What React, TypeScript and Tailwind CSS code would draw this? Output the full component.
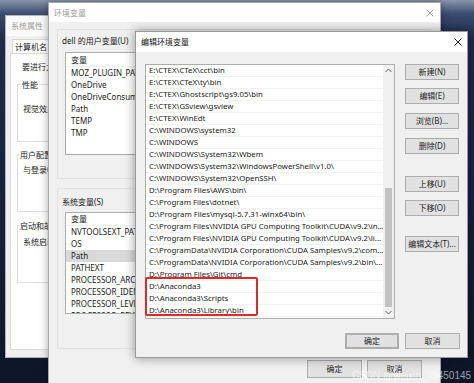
import React from "react";

const pathRows = [
  "E:\\CTEX\\CTeX\\cct\\bin",
  "E:\\CTEX\\CTeX\\ty\\bin",
  "E:\\CTEX\\Ghostscript\\gs9.05\\bin",
  "E:\\CTEX\\GSview\\gsview",
  "E:\\CTEX\\WinEdt",
  "C:\\WINDOWS\\system32",
  "C:\\WINDOWS",
  "C:\\WINDOWS\\System32\\Wbem",
  "C:\\WINDOWS\\System32\\WindowsPowerShell\\v1.0\\",
  "C:\\WINDOWS\\System32\\OpenSSH\\",
  "D:\\Program Files\\AWS\\bin\\",
  "C:\\Program Files\\dotnet\\",
  "D:\\Program Files\\mysql-5.7.31-winx64\\bin\\",
  "C:\\Program Files\\NVIDIA GPU Computing Toolkit\\CUDA\\v9.2\\in...",
  "C:\\Program Files\\NVIDIA GPU Computing Toolkit\\CUDA\\v9.2\\li...",
  "C:\\ProgramData\\NVIDIA Corporation\\CUDA Samples\\v9.2\\com...",
  "C:\\ProgramData\\NVIDIA Corporation\\CUDA Samples\\v9.2\\bin\\...",
  "D:\\Program Files\\Git\\cmd",
  "D:\\Anaconda3",
  "D:\\Anaconda3\\Scripts",
  "D:\\Anaconda3\\Library\\bin",
];

const userVars = ["MOZ_PLUGIN_PATH", "OneDrive", "OneDriveConsumer", "Path", "TEMP", "TMP"];

const sysVars = [
  "NVTOOLSEXT_PATH",
  "OS",
  "Path",
  "PATHEXT",
  "PROCESSOR_ARCHITECTURE",
  "PROCESSOR_IDENTIFIER",
  "PROCESSOR_LEVEL",
  "PROCESSOR_REVISION",
];

function CloseX({ color }: { color: string }) {
  return (
    <svg width="8" height="8" viewBox="0 0 8 8">
      <path d="M0.5 0.5L7.5 7.5M7.5 0.5L0.5 7.5" stroke={color} strokeWidth="1" />
    </svg>
  );
}

function Btn({ children, className = "" }: { children: React.ReactNode; className?: string }) {
  return (
    <div
      className={`h-[16px] flex items-center justify-center bg-[#e1e1e1] border border-[#adadad] text-[8px] text-[#1e1e1e] ${className}`}
    >
      {children}
    </div>
  );
}

function Chevron({ up }: { up?: boolean }) {
  return (
    <svg width="7" height="5" viewBox="0 0 7 5">
      <path d={up ? "M0.5 4L3.5 1L6.5 4" : "M0.5 1L3.5 4L6.5 1"} stroke="#606060" strokeWidth="1" fill="none" />
    </svg>
  );
}

function VarList({ rows, headerH, selected }: { rows: string[]; headerH: string; selected?: number }) {
  return (
    <div className="flex-1 flex flex-col bg-white border border-[#abadb3] overflow-hidden">
      <div className={`${headerH} flex items-center shrink-0 pl-[5px] border-b border-[#f0f0f0]`}>变量</div>
      {rows.map((r, i) => (
        <div
          key={r}
          className={`h-[12px] shrink-0 flex items-center pl-[5px] whitespace-nowrap ${i === selected ? "bg-[#d9d9d9]" : ""}`}
        >
          {r}
        </div>
      ))}
    </div>
  );
}

export default function App() {
  return (
    <div className="relative w-[474px] h-[383px] overflow-hidden bg-[linear-gradient(180deg,#8a96aa_0px,#3a4b6e_14px,#1c2b4e_40px,#142240_200px,#0e1528_383px)] font-['Noto_Sans','Noto_Sans_CJK_SC',sans-serif] text-[8px] text-[#1a1a1a]">
      {/* 系统属性 */}
      <div className="absolute left-[5px] top-[15px] w-[200px] h-[343px] bg-[#f0f0f0] border border-[#b4b4b4] flex flex-col">
        <div className="h-[20px] shrink-0 bg-[#fafafa] flex items-center pl-[5px] text-[#9a9a9a]">系统属性</div>
        <div className="flex pl-[6px] pt-[3px]">
          <div className="h-[14px] px-[2px] flex items-center bg-white border border-b-0 border-[#d9d9d9]">计算机名</div>
        </div>
        <div className="flex-1 mx-[4px] mb-[7px] bg-white border border-[#d9d9d9] flex flex-col pl-[6px] pt-[7px] text-[#222]">
          <div className="h-[12px] pl-[5px] whitespace-nowrap">要进行大多数更改，你必须作为管理员登录。</div>
          <div className="mt-[11px] h-[58px] border border-[#dcdcdc] relative">
            <div className="absolute -top-[6px] left-[3px] bg-white px-[1px]">性能</div>
            <div className="pl-[5px] pt-[18px] whitespace-nowrap">视觉效果，处理器计划，内存使用，以及虚拟内存</div>
          </div>
          <div className="mt-[12px] h-[58px] border border-[#dcdcdc] relative">
            <div className="absolute -top-[6px] left-[1px] bg-white px-[1px]">用户配置文件</div>
            <div className="pl-[5px] pt-[9px] whitespace-nowrap">与登录帐户相关的桌面设置</div>
          </div>
          <div className="mt-[13px] h-[58px] border border-[#dcdcdc] relative">
            <div className="absolute -top-[6px] left-[1px] bg-white px-[1px]">启动和故障恢复</div>
            <div className="pl-[5px] pt-[10px] whitespace-nowrap">系统启动、系统故障和调试信息</div>
          </div>
        </div>
      </div>

      {/* 环境变量 */}
      <div className="absolute left-[48px] top-[2px] w-[393px] h-[400px] bg-[#f0f0f0] border border-[#a8a8a8] shadow-[0_0_8px_rgba(0,0,0,0.35)] flex flex-col">
        <div className="h-[19px] shrink-0 bg-white flex items-center justify-between pl-[5px] pr-[6px] text-[#9a9a9a]">
          <span>环境变量</span>
          <CloseX color="#a0a0a0" />
        </div>
        <div className="mt-[7px] mx-[8px] h-[150px] border border-[#e2e2e2] flex flex-col pl-[4px] pr-[10px]">
          <div className="pt-[6px] h-[16px] flex items-center">dell 的用户变量(U)</div>
          <div className="mt-[6px] ml-[3px] h-[103px] flex">
            <VarList rows={userVars} headerH="h-[14px]" />
          </div>
        </div>
        <div className="mt-[9px] mx-[8px] h-[161px] border border-[#e2e2e2] flex flex-col pl-[4px] pr-[10px]">
          <div className="pt-[8px] h-[18px] flex items-center">系统变量(S)</div>
          <div className="mt-[5px] ml-[3px] h-[102px] flex">
            <VarList rows={sysVars} headerH="h-[13px]" selected={2} />
          </div>
        </div>
        <div className="mt-[11px] flex justify-end gap-[5px] pr-[18px]">
          <Btn className="w-[55px] h-[18px]">确定</Btn>
          <Btn className="w-[55px] h-[18px]">取消</Btn>
        </div>
      </div>

      {/* 编辑环境变量 */}
      <div className="absolute left-[135px] top-[31px] w-[333px] h-[327px] bg-[#f0f0f0] border border-[#9a9a9a] shadow-[0_0_10px_rgba(0,0,0,0.4)] flex flex-col">
        <div className="h-[20px] shrink-0 bg-white flex items-center justify-between pl-[5px] pr-[5px] text-[#111]">
          <span>编辑环境变量</span>
          <CloseX color="#222" />
        </div>
        <div className="flex pl-[9px] pr-[8px] pt-[12px] gap-[10px]">
          <div className="relative w-[250px] h-[255px] bg-white border border-[#adadad] flex">
            <div className="flex-1 flex flex-col overflow-hidden text-[7.8px]">
              {pathRows.map((p) => (
                <div key={p} className="h-[12px] shrink-0 leading-[11px] pl-[3px] border-b border-[#f2f2f2] whitespace-nowrap overflow-hidden">
                  {p}
                </div>
              ))}
            </div>
            <div className="w-[11px] shrink-0 bg-[#f0f0f0] flex flex-col">
              <div className="h-[11px] flex items-center justify-center">
                <Chevron up />
              </div>
              <div className="flex-1" />
              <div className="h-[119px] mx-[2px] bg-[#c2c2c2]" />
              <div className="h-[11px] flex items-center justify-center">
                <Chevron />
              </div>
            </div>
            {/* red annotation */}
            <div className="absolute left-[-1px] top-[212px] w-[113px] h-[39px] border-2 border-[#e02a2a] rounded-[2px]" />
          </div>
          <div className="w-[54px] flex flex-col">
            <Btn>新建(N)</Btn>
            <Btn className="mt-[8px]">编辑(E)</Btn>
            <Btn className="mt-[9px]">浏览(B)...</Btn>
            <Btn className="mt-[9px]">删除(D)</Btn>
            <Btn className="mt-[22px]">上移(U)</Btn>
            <Btn className="mt-[8px]">下移(O)</Btn>
            <Btn className="mt-[20px]">编辑文本(T)...</Btn>
          </div>
        </div>
        <div className="mt-[14px] flex justify-end gap-[6px] pr-[7px]">
          <Btn className="w-[54px] border-[#0078d7] border-2">确定</Btn>
          <Btn className="w-[55px]">取消</Btn>
        </div>
      </div>

      <div className="absolute left-[352px] top-[369px] text-[10px] leading-[14px] font-['Liberation_Sans',sans-serif] text-white/60 whitespace-nowrap">
        CSDN @weixin_39450145
      </div>
    </div>
  );
}
